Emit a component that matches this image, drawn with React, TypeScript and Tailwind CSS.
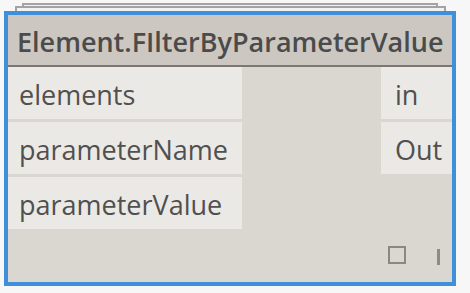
import React from "react";

const inputs = ["elements", "parameterName", "parameterValue"];
const outputs = ["in", "Out"];

const App: React.FC = () => {
  return (
    <div className="w-[470px] h-[293px] bg-[#f7f7f7] relative overflow-hidden font-['Open_Sans',sans-serif]">
      {/* stacked cards behind */}
      <div className="absolute left-[22px] top-[3px] w-[416px] h-[40px] border-2 border-[#a3a3a3] bg-[#f2f2f2]" />
      <div className="absolute left-[15px] top-[6px] w-[431px] h-[40px] border-2 border-[#a3a3a3] bg-[#f2f2f2]" />

      <div className="absolute left-[4px] top-[11px] w-[452px] h-[275px] border-[4px] border-[#3f8fdb] bg-[#dad7d0] flex flex-col">
        <div className="h-[52px] bg-[#ccc8c1] border-b-2 border-[#7b7873] flex items-center pl-[9px] pt-[3px] shrink-0">
          <span className="text-[27px] font-semibold text-[#4b4b4b] leading-none whitespace-nowrap">
            Element.FIlterByParameterValue
          </span>
        </div>

        <div className="flex justify-between flex-1">
          <div className="flex flex-col gap-[3px] w-[234px]">
            {inputs.map((name) => (
              <div
                key={name}
                className="h-[52px] bg-[#ebe9e5] flex items-center pl-[11px] pt-[3px] text-[27px] text-[#505050] leading-none"
              >
                {name}
              </div>
            ))}
          </div>
          <div className="flex flex-col gap-[3px] w-[71px]">
            {outputs.map((name) => (
              <div
                key={name}
                className="h-[52px] bg-[#ebe9e5] flex items-center pl-[14px] pt-[3px] text-[27px] text-[#505050] leading-none"
              >
                {name}
              </div>
            ))}
          </div>
        </div>

        <div className="flex items-center justify-end h-[51px] pr-[12px] gap-[31px] pb-[4px] shrink-0">
          <div className="w-[18px] h-[18px] border-2 border-[#8b8781]" />
          <div className="w-[3px] h-[16px] bg-[#8e8a86] mt-[4px]" />
        </div>
      </div>
    </div>
  );
};

export default App;
